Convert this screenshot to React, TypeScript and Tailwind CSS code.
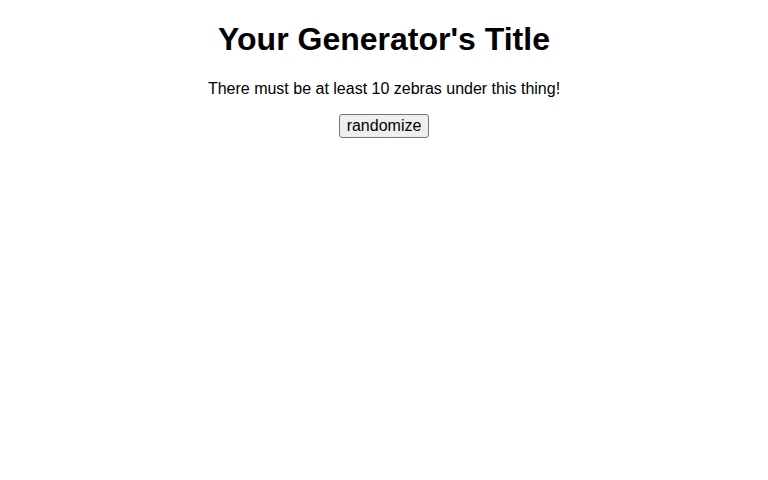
import { useState } from "react";

const lines = [
  "There must be at least 10 zebras under this thing!",
];

export default function App() {
  const [line, setLine] = useState(lines[0]);

  return (
    <div className="min-h-screen bg-white text-center text-black font-['Liberation_Sans',Arial,sans-serif]">
      <h1 className="pt-[21px] text-[32px] leading-[37px] font-bold">Your Generator's Title</h1>
      <p className="mt-[22px] text-base leading-[18px]">{line}</p>
      <button
        className="mt-4 rounded-[3px] border border-[#767676] bg-[#efefef] px-[7px] py-[1px] text-base leading-[20px] text-black"
        onClick={() => setLine(lines[Math.floor(Math.random() * lines.length)])}
      >
        randomize
      </button>
    </div>
  );
}
